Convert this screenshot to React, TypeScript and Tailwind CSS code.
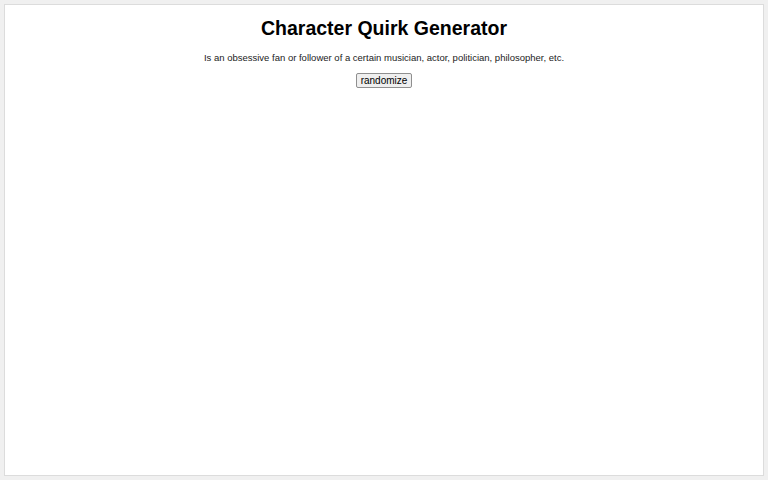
export default function App() {
  return (
    <div className="h-[480px] w-[768px] bg-[#f0f0f0] p-[4px] font-['Liberation_Sans',Arial,sans-serif]">
      <div className="flex h-full flex-col items-center border border-[#dcdcdc] bg-white">
        <h1 className="mt-[12px] text-[19.5px] font-bold leading-[22px] text-black">Character Quirk Generator</h1>
        <p className="mt-[13px] text-[9.5px] leading-[11px] text-[#222]">
          Is an obsessive fan or follower of a certain musician, actor, politician, philosopher, etc.
        </p>
        <button className="mt-[10px] rounded-[2px] border border-[#8f8f8f] bg-[#efefef] px-[4px] text-[10px] leading-[13px] text-black">
          randomize
        </button>
      </div>
    </div>
  );
}
